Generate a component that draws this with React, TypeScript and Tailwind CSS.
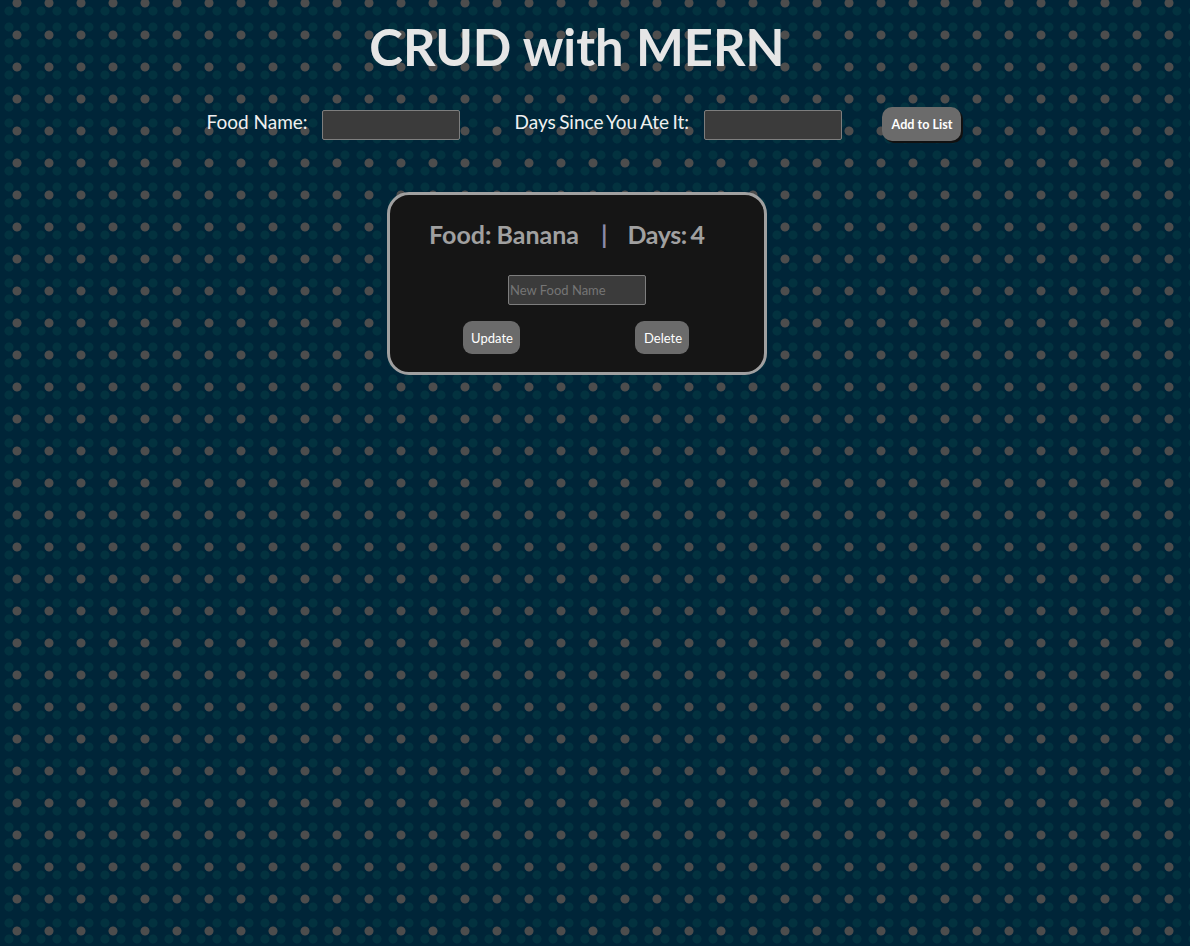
export default function App() {
  return (
    <div className="min-h-[946px] font-['Lato','Open_Sans',sans-serif] bg-[#002538] bg-[radial-gradient(circle_at_center,#4d4d4d_4.1px,transparent_4.9px),radial-gradient(circle_at_center,#03323f_4.1px,transparent_4.9px)] bg-[length:32px_32px,16px_16px] bg-[position:1px_-13px,1px_3px]">
      <div className="w-[1154px] flex flex-col items-center pt-[17px]">
        <h1 className="text-[50.7px] leading-[60px] font-bold text-[#e6e6e6]">CRUD with MERN</h1>

        {/* Add food form */}
        <div className="mt-[30px] ml-[13px] h-[34px] flex items-center text-[19px] text-[#f0f0f0]">
          <label className="w-[115px] mb-[3px]">Food Name:</label>
          <input className="w-[138px] h-[30px] mt-[1px] bg-[#3b3b3b] border border-[#7d7d7d] rounded-[2px] outline-none" />
          <label className="ml-[55px] w-[189px] mb-[3px] [word-spacing:-1.5px]">Days Since You Ate It:</label>
          <input className="w-[138px] h-[30px] mt-[1px] bg-[#3b3b3b] border border-[#7d7d7d] rounded-[2px] outline-none" />
          <button className="ml-[40px] w-[79px] h-[34px] pt-[2px] pl-[2px] rounded-[10px] bg-[#6b6b6b] text-[12.6px] font-bold text-white shadow-[2px_2px_0_#111]">
            Add to List
          </button>
        </div>

        {/* Food card */}
        <div className="mt-[51px] w-[380px] h-[183px] flex flex-col rounded-[22px] border-[3px] border-[#a0a0a0] bg-[#151515]">
          <div className="mt-[22px] ml-[39px] flex items-center text-[25px] leading-[34px] font-bold text-[#a0a0a0]">
            <span className="[word-spacing:-1px]">Food: Banana</span>
            <span className="ml-[22px] text-[#8a8aa8]">|</span>
            <span className="ml-[20px] [word-spacing:-2px] tracking-[-0.4px]">Days: 4</span>
          </div>
          <input
            placeholder="New Food Name"
            className="mt-[24px] ml-[118px] w-[138px] h-[30px] px-[1px] bg-[#3b3b3b] border border-[#7d7d7d] rounded-[2px] text-[13px] placeholder:text-[#757575] outline-none"
          />
          <div className="mt-[16px] flex">
            <button className="ml-[73px] w-[57px] h-[33px] pt-[2px] pl-[1px] rounded-[9px] bg-[#6b6b6b] text-[13px] text-white">Update</button>
            <button className="ml-[115px] w-[54px] h-[33px] pt-[2px] pl-[2px] rounded-[9px] bg-[#6b6b6b] text-[13px] text-white">Delete</button>
          </div>
        </div>
      </div>
    </div>
  );
}
